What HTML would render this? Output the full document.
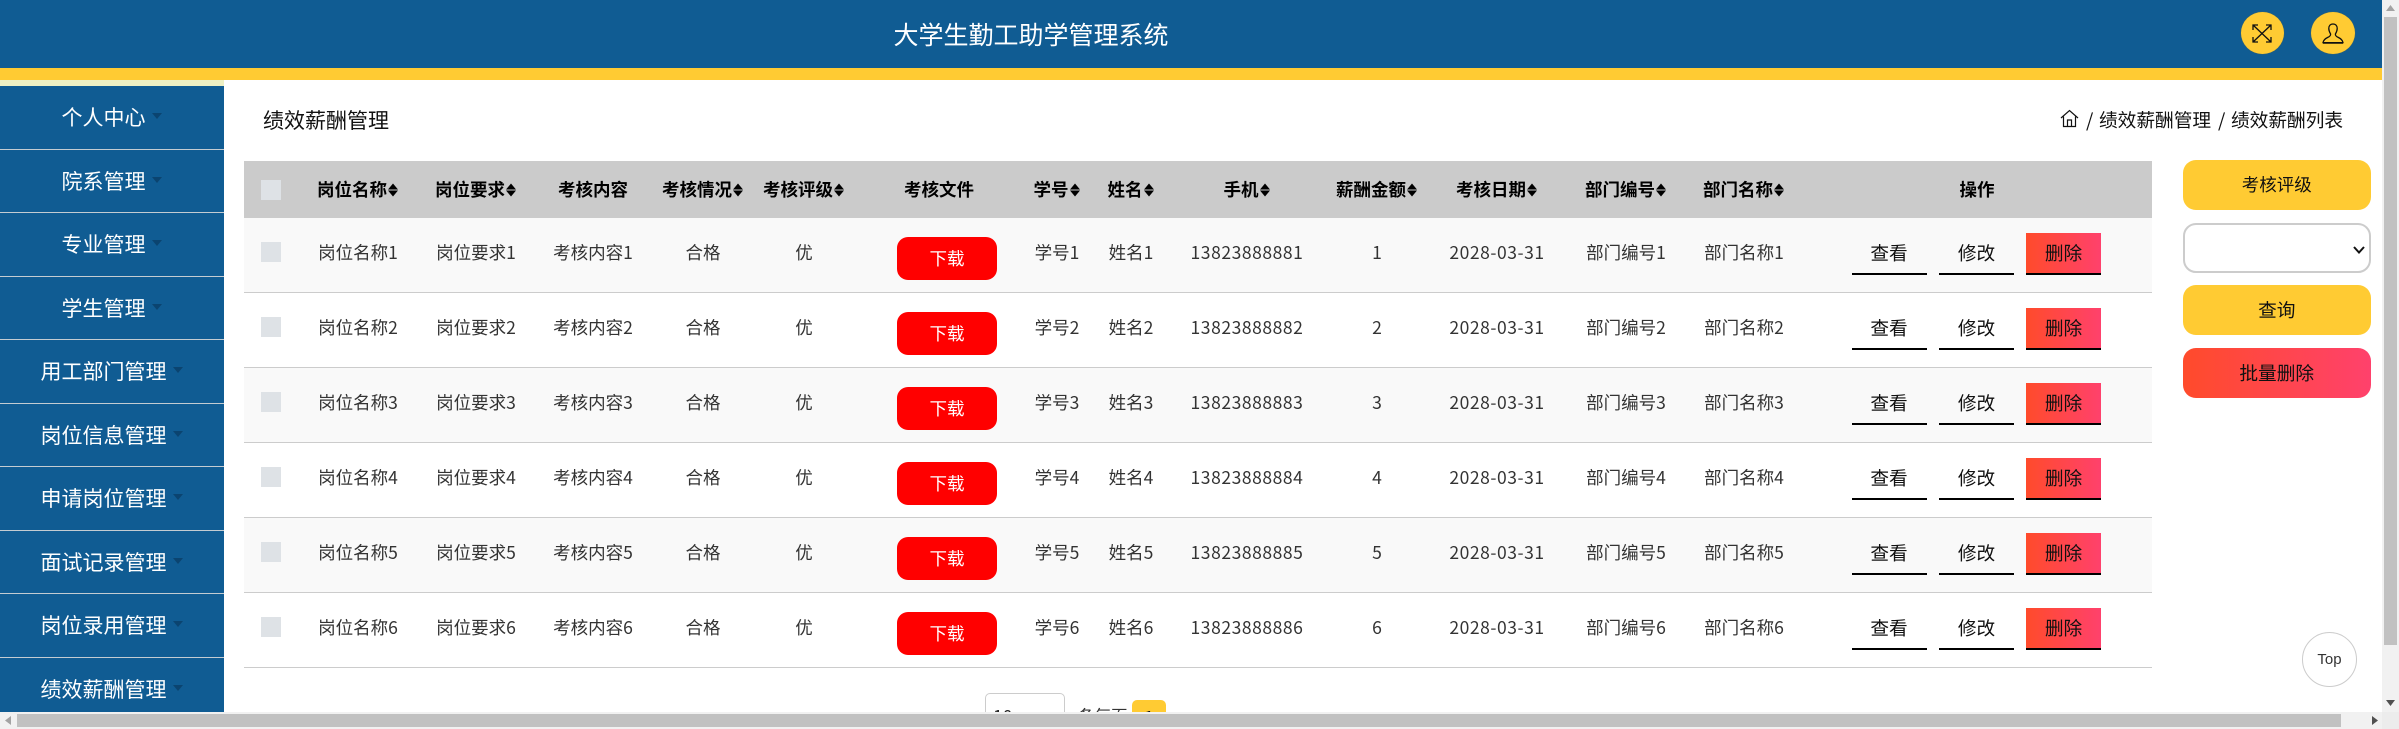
<!DOCTYPE html>
<html lang="zh">
<head>
<meta charset="utf-8">
<title>绩效薪酬管理</title>
<style>
html,body{margin:0;padding:0;background:#fff;width:2399px;height:729px;overflow:hidden}
body{position:relative;font-family:"Liberation Sans","Noto Sans CJK SC",sans-serif;color:#333}
*{box-sizing:border-box}
#m{position:absolute;left:0;top:0;width:2382px;height:712px;overflow:hidden;background:#fff;font-family:"Noto Sans CJK SC","Liberation Sans",sans-serif}
.hd{position:absolute;left:0;top:0;width:2382px;height:68px;background:#105c93}
.yl{position:absolute;left:0;top:68px;width:2382px;height:12px;background:#ffcb33}
.ttl{position:absolute;left:0;top:14px;width:2062px;text-align:center;font-size:25px;line-height:40px;color:#fff}
.ic{position:absolute;top:12px;height:42px;border-radius:50%;background:#ffcb33;box-shadow:0 0 1px #7c7034}
.ic svg{position:absolute;fill:none;stroke:#111}
.pale{position:absolute;left:0;top:80px;width:224px;height:6px;background:#eef0c4}
.sb{position:absolute;left:0;top:86px;width:224px;height:626px;background:#105c93}
.it{position:absolute;left:0;width:224px;height:63px;border-bottom:1px solid #c4ccd2;text-align:center;color:#fff;font-size:21px;line-height:63px;white-space:nowrap}
.it:last-child{border:0}
.it i{display:inline-block;width:0;height:0;border-left:5.5px solid transparent;border-right:5.5px solid transparent;border-top:6px solid #0b4470;margin-left:6px;margin-right:1px;vertical-align:6px}
.sub{position:absolute;left:263px;top:105px;font-size:21px;line-height:30px;color:#111}
.bc{position:absolute;top:106px;font-size:18.7px;line-height:28px;color:#111;white-space:nowrap}
.r{position:absolute;left:244px;width:1907.5px;height:75px;border-bottom:1px solid #ccc;font-size:17.5px;color:#333}
.r.o{background:#f9f9f9}
.h{position:absolute;left:244px;top:161px;width:1907.5px;height:57px;background:#cbcbcb;font-size:17.5px;font-weight:700;color:#000}
.h span{line-height:57px;top:0}
.r span{top:21px;line-height:28px}
span.c{position:absolute;width:200px;text-align:center;white-space:nowrap}
.h svg{width:12px;height:14px;vertical-align:-1px}
.cb{position:absolute;left:17px;width:20px;height:20px;background:#dee2e6}
.h .cb{top:19px}.r .cb{top:24px}
.c1{left:14px}.c2{left:132px}.c3{left:249px}.c4{left:359px}.c5{left:460px}.c6{left:595px}
.c7{left:713px}.c8{left:787px}.c9{left:903px}.c10{left:1033px}.c11{left:1153px}.c12{left:1282px}.c13{left:1400px}.c14{left:1633px}
.p{letter-spacing:.55px}
.dl{position:absolute;left:653px;top:19px;width:100px;height:43px;border-radius:11px;background:#f00;color:#fff;text-align:center;font-size:17.5px;line-height:43px}
.b{position:absolute;top:15px;width:75px;height:42px;border-bottom:2px solid #000;color:#111;text-align:center;font-size:18.7px;line-height:40px}
.b.v{left:1607.5px}.b.e{left:1695px}
.b.d{left:1782px;background:linear-gradient(90deg,#ff4b2b,#ff416c)}
.sd{position:absolute;left:2183px;width:187.5px;height:50px;border-radius:13px;background:#ffcb33;text-align:center;color:#111;line-height:50px}
.sel{position:absolute;left:2183px;top:223px;width:187.5px;height:50px;border:2px solid #ccc;border-radius:13px;background:#fff}
.sel svg{position:absolute;left:168px;top:21px}
.top{position:absolute;left:2302px;top:632px;width:55px;height:55px;border:1px solid #ccc;border-radius:50%;background:#fff;text-align:center;font:15px/53px "Liberation Sans",sans-serif;color:#333}
.ps{position:absolute;left:985px;top:693px;width:80px;height:48px;border:1px solid #ccc;border-radius:5px;background:#fff;font-size:17.5px;line-height:46px;padding-left:7px;color:#222}
.sc{position:absolute;background:#f1f1f1}
.th{position:absolute;background:#c1c1c1}
</style>
</head>
<body>
<div id="m">
  <div class="hd"></div>
  <div class="yl"></div>
  <div class="ttl">大学生勤工助学管理系统</div>
  <div class="ic" style="left:2241px;width:43px">
    <svg style="left:11px;top:12px" width="20" height="19" viewBox="0 0 20 19" stroke-width="1.3"><path d="M1 1L19 18M19 1L1 18M1 6V1H6M14 1H19V6M1 13V18H6M14 18H19V13"/></svg>
  </div>
  <div class="ic" style="left:2311px;width:44px">
    <svg style="left:11px;top:11px" width="22" height="21" viewBox="0 0 22 21" stroke-width="1.3"><path d="M11 1C8.2 1 6.8 3 6.8 5.5C6.8 8 7.8 9.6 8.6 11C8.8 12.6 7.6 13.6 5.8 14.4C3.6 15.4 1.6 16.6 1 19.6H21C20.4 16.6 18.4 15.4 16.2 14.4C14.4 13.6 13.2 12.6 13.4 11C14.2 9.6 15.2 8 15.2 5.5C15.2 3 13.8 1 11 1Z"/><path d="M1 20H21" stroke-width="1.6"/></svg>
  </div>

  <div class="pale"></div>
  <div class="sb">
    <div class="it" style="top:0;height:64px">个人中心<i></i></div>
    <div class="it" style="top:64px">院系管理<i></i></div>
    <div class="it" style="top:127px;height:64px">专业管理<i></i></div>
    <div class="it" style="top:191px">学生管理<i></i></div>
    <div class="it" style="top:254px;height:64px">用工部门管理<i></i></div>
    <div class="it" style="top:318px">岗位信息管理<i></i></div>
    <div class="it" style="top:381px;height:64px">申请岗位管理<i></i></div>
    <div class="it" style="top:445px">面试记录管理<i></i></div>
    <div class="it" style="top:508px;height:64px">岗位录用管理<i></i></div>
    <div class="it" style="top:572px;height:54px">绩效薪酬管理<i></i></div>
  </div>

  <div class="sub">绩效薪酬管理</div>
  <svg style="position:absolute;left:2060px;top:109px" width="19" height="19" viewBox="0 0 19 19" fill="none" stroke="#111" stroke-width="1.2"><path d="M1 9L9.5 1.5L18 9M3.5 7.5V17.5H15.5V7.5M7.5 17.5V11H11.5V17.5"/></svg>
  <div class="bc" style="left:2086px">/</div>
  <div class="bc" style="left:2099px">绩效薪酬管理</div>
  <div class="bc" style="left:2218px">/</div>
  <div class="bc" style="left:2231px">绩效薪酬列表</div>

  <div class="h">
    <div class="cb"></div>
    <span class="c c1">岗位名称<svg viewBox="0 0 12 14"><path d="M6 .5L11 6.5H1zM6 13.500L1 7.500H11z"/></svg></span>
    <span class="c c2">岗位要求<svg viewBox="0 0 12 14"><path d="M6 .5L11 6.5H1zM6 13.500L1 7.500H11z"/></svg></span>
    <span class="c c3">考核内容</span>
    <span class="c c4">考核情况<svg viewBox="0 0 12 14"><path d="M6 .5L11 6.5H1zM6 13.500L1 7.500H11z"/></svg></span>
    <span class="c c5">考核评级<svg viewBox="0 0 12 14"><path d="M6 .5L11 6.5H1zM6 13.500L1 7.500H11z"/></svg></span>
    <span class="c c6">考核文件</span>
    <span class="c c7">学号<svg viewBox="0 0 12 14"><path d="M6 .5L11 6.5H1zM6 13.500L1 7.500H11z"/></svg></span>
    <span class="c c8">姓名<svg viewBox="0 0 12 14"><path d="M6 .5L11 6.5H1zM6 13.500L1 7.500H11z"/></svg></span>
    <span class="c c9">手机<svg viewBox="0 0 12 14"><path d="M6 .5L11 6.5H1zM6 13.500L1 7.500H11z"/></svg></span>
    <span class="c c10">薪酬金额<svg viewBox="0 0 12 14"><path d="M6 .5L11 6.5H1zM6 13.500L1 7.500H11z"/></svg></span>
    <span class="c c11">考核日期<svg viewBox="0 0 12 14"><path d="M6 .5L11 6.5H1zM6 13.500L1 7.500H11z"/></svg></span>
    <span class="c c12">部门编号<svg viewBox="0 0 12 14"><path d="M6 .5L11 6.5H1zM6 13.500L1 7.500H11z"/></svg></span>
    <span class="c c13">部门名称<svg viewBox="0 0 12 14"><path d="M6 .5L11 6.5H1zM6 13.500L1 7.500H11z"/></svg></span>
    <span class="c c14">操作</span>
  </div>

  <div class="r o" style="top:218px">
    <div class="cb"></div>
    <span class="c c1">岗位名称1</span><span class="c c2">岗位要求1</span><span class="c c3">考核内容1</span><span class="c c4">合格</span><span class="c c5">优</span>
    <div class="dl">下载</div>
    <span class="c c7">学号1</span><span class="c c8">姓名1</span><span class="c c9 p">13823888881</span><span class="c c10">1</span><span class="c c11 p">2028-03-31</span><span class="c c12">部门编号1</span><span class="c c13">部门名称1</span>
    <div class="b v">查看</div><div class="b e">修改</div><div class="b d">删除</div>
  </div>
  <div class="r" style="top:293px">
    <div class="cb"></div>
    <span class="c c1">岗位名称2</span><span class="c c2">岗位要求2</span><span class="c c3">考核内容2</span><span class="c c4">合格</span><span class="c c5">优</span>
    <div class="dl">下载</div>
    <span class="c c7">学号2</span><span class="c c8">姓名2</span><span class="c c9 p">13823888882</span><span class="c c10">2</span><span class="c c11 p">2028-03-31</span><span class="c c12">部门编号2</span><span class="c c13">部门名称2</span>
    <div class="b v">查看</div><div class="b e">修改</div><div class="b d">删除</div>
  </div>
  <div class="r o" style="top:368px">
    <div class="cb"></div>
    <span class="c c1">岗位名称3</span><span class="c c2">岗位要求3</span><span class="c c3">考核内容3</span><span class="c c4">合格</span><span class="c c5">优</span>
    <div class="dl">下载</div>
    <span class="c c7">学号3</span><span class="c c8">姓名3</span><span class="c c9 p">13823888883</span><span class="c c10">3</span><span class="c c11 p">2028-03-31</span><span class="c c12">部门编号3</span><span class="c c13">部门名称3</span>
    <div class="b v">查看</div><div class="b e">修改</div><div class="b d">删除</div>
  </div>
  <div class="r" style="top:443px">
    <div class="cb"></div>
    <span class="c c1">岗位名称4</span><span class="c c2">岗位要求4</span><span class="c c3">考核内容4</span><span class="c c4">合格</span><span class="c c5">优</span>
    <div class="dl">下载</div>
    <span class="c c7">学号4</span><span class="c c8">姓名4</span><span class="c c9 p">13823888884</span><span class="c c10">4</span><span class="c c11 p">2028-03-31</span><span class="c c12">部门编号4</span><span class="c c13">部门名称4</span>
    <div class="b v">查看</div><div class="b e">修改</div><div class="b d">删除</div>
  </div>
  <div class="r o" style="top:518px">
    <div class="cb"></div>
    <span class="c c1">岗位名称5</span><span class="c c2">岗位要求5</span><span class="c c3">考核内容5</span><span class="c c4">合格</span><span class="c c5">优</span>
    <div class="dl">下载</div>
    <span class="c c7">学号5</span><span class="c c8">姓名5</span><span class="c c9 p">13823888885</span><span class="c c10">5</span><span class="c c11 p">2028-03-31</span><span class="c c12">部门编号5</span><span class="c c13">部门名称5</span>
    <div class="b v">查看</div><div class="b e">修改</div><div class="b d">删除</div>
  </div>
  <div class="r" style="top:593px">
    <div class="cb"></div>
    <span class="c c1">岗位名称6</span><span class="c c2">岗位要求6</span><span class="c c3">考核内容6</span><span class="c c4">合格</span><span class="c c5">优</span>
    <div class="dl">下载</div>
    <span class="c c7">学号6</span><span class="c c8">姓名6</span><span class="c c9 p">13823888886</span><span class="c c10">6</span><span class="c c11 p">2028-03-31</span><span class="c c12">部门编号6</span><span class="c c13">部门名称6</span>
    <div class="b v">查看</div><div class="b e">修改</div><div class="b d">删除</div>
  </div>

  <div class="sd" style="top:160px;font-size:17.5px">考核评级</div>
  <div class="sel"><svg width="12" height="8" viewBox="0 0 12 8" fill="none" stroke="#111" stroke-width="2"><path d="M1 1L6 6.500L11 1"/></svg></div>
  <div class="sd" style="top:285px;font-size:18.7px">查询</div>
  <div class="sd" style="top:348px;font-size:18.7px;background:linear-gradient(90deg,#ff4b2b,#ff416c)">批量删除</div>

  <div class="ps">10<svg style="position:absolute;left:61px;top:18px" width="12" height="8" viewBox="0 0 12 8" fill="none" stroke="#999" stroke-width="1.5"><path d="M1 1L6 6L11 1"/></svg></div>
  <div style="position:absolute;left:1078px;top:701px;font-size:16.5px;line-height:28px;color:#333">条每页</div>
  <div style="position:absolute;left:1132px;top:700px;width:34px;height:34px;border-radius:5px;background:#ffcb33;text-align:center;font-size:17.5px;line-height:36px;color:#111">1</div>

  <div class="top">Top</div>
</div>

<div class="sc" style="left:2382px;top:0;width:17px;height:712px"></div>
<div class="th" style="left:2384px;top:17px;width:13px;height:628px"></div>
<svg style="position:absolute;left:2386px;top:5px" width="9" height="6"><path d="M4.500 0L9 6H0z" fill="#a3a3a3"/></svg>
<svg style="position:absolute;left:2386px;top:700px" width="9" height="6"><path d="M4.500 6L9 0H0z" fill="#505050"/></svg>
<div class="sc" style="left:0;top:712px;width:2399px;height:17px"></div>
<div class="th" style="left:17px;top:714px;width:2324px;height:13px"></div>
<svg style="position:absolute;left:5px;top:716px" width="6" height="9"><path d="M0 4.500L6 0V9z" fill="#a3a3a3"/></svg>
<svg style="position:absolute;left:2372px;top:716px" width="6" height="9"><path d="M6 4.500L0 0V9z" fill="#505050"/></svg>
<div style="position:absolute;left:2382px;top:712px;width:17px;height:17px;background:#ececec"></div>
</body>
</html>
